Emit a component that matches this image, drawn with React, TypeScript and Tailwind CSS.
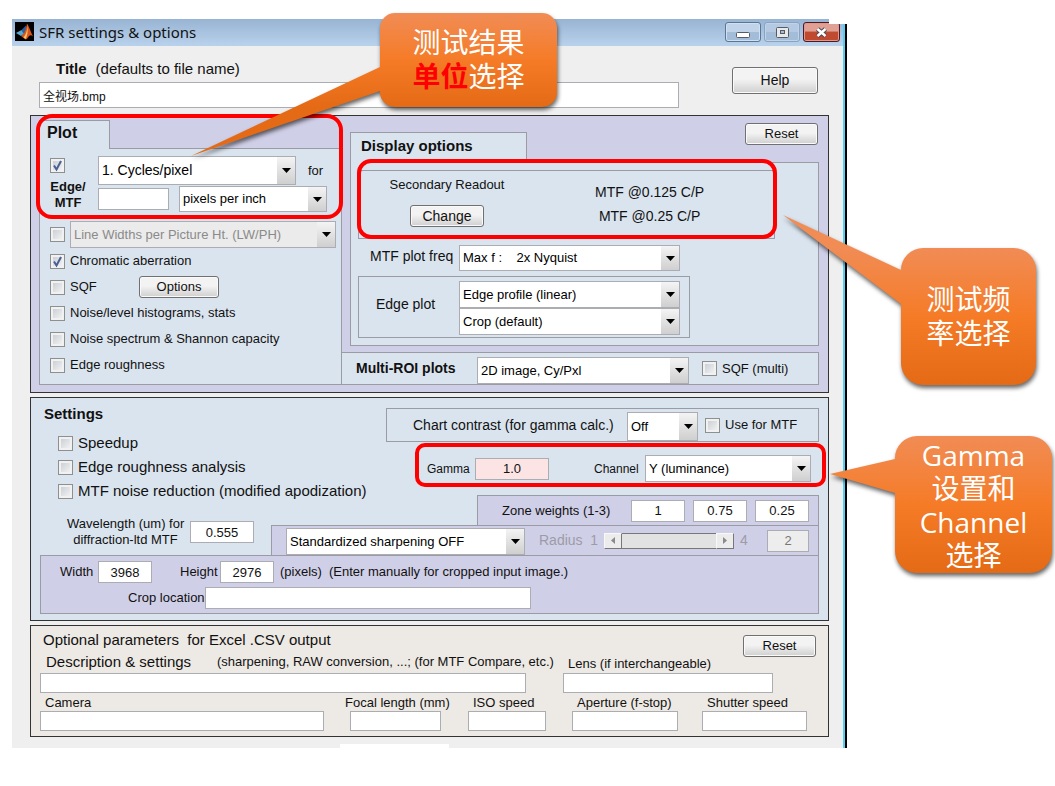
import clsx from 'clsx';
import { FC, ReactNode, useId } from 'react';

type SelectProps = {
  label: string;
  options: string[];
  className?: string;
  disabled?: boolean;
  id?: string;
};

const Select: FC<SelectProps> = ({ label, options, className, disabled, id }) => (
  <div className={clsx('relative shrink-0', className)}>
    <select
      id={id}
      aria-label={label}
      disabled={disabled}
      className={clsx(
        'block h-full w-full appearance-none border border-[#abadb3] pl-[3px] pr-5 opacity-100',
        disabled ? 'bg-[#ebebeb] text-[#8a8a8a]' : 'bg-white text-black',
      )}
    >
      {options.map((option) => (
        <option key={option}>{option}</option>
      ))}
    </select>
    <span className="pointer-events-none absolute inset-y-px right-px flex w-[18px] items-center justify-center bg-linear-to-b from-[#f4f4f4] to-[#cfcfcf]">
      <svg width="9" height="5" viewBox="0 0 9 5">
        <path d="M0 0h9L4.500 5z" fill="#000" />
      </svg>
    </span>
  </div>
);

type CheckboxProps = {
  children?: ReactNode;
  label?: string;
  checked?: boolean;
  className?: string;
};

const Checkbox: FC<CheckboxProps> = ({
  children,
  label,
  checked,
  className,
}) => (
  <label className={clsx('flex items-center gap-[5px] whitespace-nowrap', className)}>
    <span className="relative size-[15px] shrink-0">
      <input
        type="checkbox"
        aria-label={label}
        defaultChecked={checked}
        className="peer block size-full appearance-none border border-[#8e8f8f] bg-linear-to-br from-[#c4c9cf] to-[#f8f8f8] shadow-[inset_0_0_0_2px_#f1f1f1]"
      />
      <svg
        viewBox="0 0 15 15"
        className="pointer-events-none absolute inset-0 hidden peer-checked:block"
      >
        <path
          d="M4 7.500l2.500 4L11 3"
          fill="none"
          stroke="#4a5f97"
          strokeWidth="2"
        />
      </svg>
    </span>
    {children}
  </label>
);

type ButtonProps = {
  children: ReactNode;
  className?: string;
};

const Button: FC<ButtonProps> = ({ children, className }) => (
  <button
    type="button"
    className={clsx(
      'shrink-0 rounded-[3px] border border-[#707070] bg-linear-to-b from-[#f3f3f3] from-45% to-[#cfcfcf] shadow-[inset_0_0_0_1px_#fafafa]',
      className,
    )}
  >
    {children}
  </button>
);

type TextBoxProps = {
  id?: string;
  label?: string;
  value?: string;
  className?: string;
  disabled?: boolean;
};

const TextBox: FC<TextBoxProps> = ({ id, label, value, className, disabled }) => (
  <input
    id={id}
    type="text"
    aria-label={label}
    defaultValue={value}
    disabled={disabled}
    className={clsx('block border border-[#abadb3]', className)}
  />
);

type FieldProps = {
  label: string;
  className?: string;
  inputClassName?: string;
};

const Field: FC<FieldProps> = ({ label, className, inputClassName }) => {
  const id = useId();

  return (
    <div className={clsx('flex flex-col', className)}>
      <label htmlFor={id} className="h-[18px] leading-5 whitespace-nowrap">
        {label}
      </label>
      <TextBox id={id} className={clsx('h-5 bg-white', inputClassName)} />
    </div>
  );
};

type CalloutProps = {
  id: string;
  width: number;
  height: number;
  radius: number;
  tip: [number, number];
  base: [number, number];
  className: string;
  children: ReactNode;
};

// Rounded note whose pointer leaves from the left side
const Callout: FC<CalloutProps> = ({
  id,
  width: w,
  height: h,
  radius: r,
  tip,
  base,
  className,
  children,
}) => {
  const outline = [
    `M${r} 0H${w - r}A${r} ${r} 0 0 1 ${w} ${r}V${h - r}`,
    `A${r} ${r} 0 0 1 ${w - r} ${h}H${r}A${r} ${r} 0 0 1 0 ${h - r}`,
    `V${base[1]}L${tip[0]} ${tip[1]}L0 ${base[0]}V${r}A${r} ${r} 0 0 1 ${r} 0Z`,
  ].join('');

  return (
    <aside
      className={clsx(
        'absolute flex items-center justify-center text-center text-[28px] text-white',
        className,
      )}
    >
      <svg
        width={w}
        height={h}
        className="absolute top-0 left-0 overflow-visible drop-shadow-[1px_3px_2px_rgba(0,0,0,0.6)]"
      >
        <defs>
          <linearGradient id={id} gradientUnits="userSpaceOnUse" x1="0" y1="0" x2="0" y2={h}>
            <stop offset="0" stopColor="#f18c55" />
            <stop offset="0.5" stopColor="#f57b27" />
            <stop offset="1" stopColor="#e46a15" />
          </linearGradient>
        </defs>
        <path d={outline} fill={`url(#${id})`} />
      </svg>
      <p className="relative pt-0.5">{children}</p>
    </aside>
  );
};

const Highlight: FC<{ className: string }> = ({ className }) => (
  <div
    className={clsx(
      'pointer-events-none absolute z-10 border-4 border-[#fe0000]',
      className,
    )}
  />
);

const TitleBar = () => (
  <header className="relative flex h-[27px] items-start bg-linear-to-b from-[#98b4d3] to-[#b9d2ec] pt-[3px] pr-[3px] pl-[3px]">
    <svg width="19" height="19" viewBox="0 0 19 19" className="shrink-0 bg-black">
      <path d="M1 11l5.500-3 3 3.500L6 14z" fill="#5aa7cf" />
      <path d="M6.500 8L11 3.500l.5 4L9 12z" fill="#2b5f9e" />
      <path d="M12 1.500c2 3 3.500 8 6 13-2-2-3.500-1.500-5 1-1.200 2-2.500 2.500-3 1.500L6 14c4-2 5-7 6-12.500z" fill="#d9561a" />
      <path d="M12 2c.5 4 .3 9-3.500 13.500L10.500 17c2.500-4 2.500-10 1.500-15z" fill="#f9c46b" />
    </svg>
    <h1 className="ml-[5px] flex-1 font-['Noto_Sans','Open_Sans',sans-serif] text-[15px] leading-5 text-[#111]">
      SFR settings &amp; options
    </h1>
    <div className="flex gap-[3px]">
      <button
        type="button"
        aria-label="Minimize"
        className="flex h-5 w-9 items-center justify-center rounded-[3px] border border-[#5b7593] bg-linear-to-b from-[#c1d3e8] from-50% to-[#a3bcd8] to-50% pt-1 shadow-[inset_0_0_0_1px_#cfe0f2]"
      >
        <svg width="14" height="7" viewBox="0 0 14 7">
          <rect x="0.500" y="1.500" width="13" height="5" rx="1" fill="#fff" stroke="#555b66" />
        </svg>
      </button>
      <button
        type="button"
        aria-label="Maximize"
        className="flex h-5 w-9 items-center justify-center rounded-[3px] border border-[#8aa3c0] bg-linear-to-b from-[#b5cae2] from-50% to-[#a3bcd8] to-50% shadow-[inset_0_0_0_1px_#bfd3e9]"
      >
        <svg width="13" height="11" viewBox="0 0 13 11">
          <rect x="0.500" y="0.500" width="12" height="10" rx="1" fill="#e8e8e8" stroke="#555b66" />
          <rect x="4.500" y="3.500" width="4" height="3" fill="#a3bcd8" stroke="#555b66" />
        </svg>
      </button>
      <button
        type="button"
        aria-label="Close"
        className="flex h-5 w-[37px] items-center justify-center rounded-[3px] border border-[#4d1a24] bg-linear-to-b from-[#e0a093] from-45% to-[#c04a30] to-50% shadow-[inset_0_0_0_1px_#dd9a8c]"
      >
        <svg width="13" height="11" viewBox="0 0 13 11">
          <path d="M2.500 2l8 7M10.500 2l-8 7" stroke="#4f4a55" strokeWidth="4.500" />
          <path d="M2.500 2l8 7M10.500 2l-8 7" stroke="#fff" strokeWidth="2.500" />
        </svg>
      </button>
    </div>
    <span className="absolute top-0 -right-1 h-[5px] w-[18px] bg-white" />
  </header>
);

const PlotOptions = () => (
  <section className="relative w-[303px] shrink-0 pt-1">
    <Highlight className="-top-[2px] -right-px -left-[3px] h-[105px] rounded-[16px]" />
    <h2 className="relative -mb-px h-[29px] w-[71px] border border-b-0 border-[#9b9ba3] bg-[#dae4ee] pl-[7px] text-[16px] leading-6 font-bold">
      Plot
    </h2>
    <div className="border border-[#9b9ba3] bg-[#dae4ee] pt-[7px] pb-1.5 pl-[10px]">
      <div className="flex">
        <label className="flex w-12 flex-col font-bold">
          <Checkbox label="Edge/MTF" checked className="mt-0.5" />
          <span className="mt-[6px] w-9 text-center leading-4">Edge/ MTF</span>
        </label>
        <div className="flex flex-col">
          <div className="flex items-center">
            <Select label="Plot units" options={['1. Cycles/pixel']} className="h-[29px] w-[198px] text-[14px]" />
            <span className="ml-3">for</span>
          </div>
          <div className="mt-px flex items-center gap-[10px]">
            <TextBox label="Pixel density" className="h-[22px] w-[71px] bg-white" />
            <Select label="Density units" options={['pixels per inch']} className="h-[26px] w-[148px]" />
          </div>
        </div>
      </div>
      <div className="mt-[9px] flex items-center gap-[5px]">
        <Checkbox label="Line widths" />
        <Select
          label="Line width units"
          disabled
          options={['Line Widths per Picture Ht. (LW/PH)']}
          className="h-[27px] w-[266px]"
        />
      </div>
      <Checkbox checked className="h-[26px]">
        Chromatic aberration
      </Checkbox>
      <div className="flex h-[26px] items-center">
        <Checkbox className="w-[89px]">SQF</Checkbox>
        <Button className="h-[22px] w-20">Options</Button>
      </div>
      <Checkbox className="h-[26px]">Noise/level histograms, stats</Checkbox>
      <Checkbox className="h-[26px]">Noise spectrum &amp; Shannon capacity</Checkbox>
      <Checkbox className="h-[26px]">Edge roughness</Checkbox>
    </div>
  </section>
);

const DisplayOptions = () => (
  <section className="-ml-px flex flex-1 flex-col">
    <div className="ml-[9px] flex justify-between">
      <h2 className="relative mt-4 -mb-px h-[31px] w-[177px] border border-b-0 border-[#9b9ba3] bg-[#dae4ee] pl-[10px] text-[15px] leading-[26px] font-bold">
        Display options
      </h2>
      <Button className="mt-[7px] mr-px h-[22px] w-[73px]">Reset</Button>
    </div>
    <div className="ml-[9px] border border-[#9b9ba3] bg-[#dae4ee] p-[7px]">
      <div className="relative flex h-[69px] w-[417px] border border-[#9b9ba3]">
        <Highlight className="-top-3 -right-[3px] -bottom-px -left-[2px] rounded-[14px]" />
        <div className="ml-[31px] flex w-[114px] flex-col items-center pt-1.5">
          <span className="leading-4 whitespace-nowrap">Secondary Readout</span>
          <Button className="mt-3 h-[22px] w-[74px] text-[14px]">Change</Button>
        </div>
        <div className="ml-[91px] pt-[9px] text-center text-[14px] leading-6">
          <p>MTF @0.125 C/P</p>
          <p>MTF @0.25 C/P</p>
        </div>
      </div>
      <div className="mt-1.5 flex">
        <label htmlFor="plot-freq" className="w-[101px] pl-3 text-[14px] leading-[23px] whitespace-nowrap">
          MTF plot freq
        </label>
        <Select
          id="plot-freq"
          label="MTF plot freq"
          options={['Max f :\u00a0\u00a0\u00a0 2x Nyquist']}
          className="h-[26px] w-[221px]"
        />
      </div>
      <div className="mt-[5px] flex w-[332px] border border-[#9b9ba3] pt-1 pb-0.5">
        <span className="w-[100px] self-center pb-2 pl-[17px] text-[14px]">Edge plot</span>
        <div>
          <Select label="Edge plot" options={['Edge profile (linear)']} className="h-[27px] w-[221px]" />
          <Select label="Edge plot crop" options={['Crop (default)']} className="h-[27px] w-[221px]" />
        </div>
      </div>
    </div>
    <div className="mt-auto flex h-[33px] items-center border border-[#9b9ba3] bg-[#dae4ee] pl-[14px]">
      <label htmlFor="multi-roi" className="w-[121px] text-[14px] font-bold">
        Multi-ROI plots
      </label>
      <Select
        id="multi-roi"
        label="Multi-ROI plots"
        options={['2D image, Cy/Pxl']}
        className="h-[27px] w-[212px] self-end"
      />
      <Checkbox className="ml-[13px]">SQF (multi)</Checkbox>
    </div>
  </section>
);

const Settings = () => (
  <section className="mt-1 border border-[#333] bg-[#dae4ee] pr-[9px] pb-1.5 pl-[9px]">
    <div className="flex">
      <div className="w-[231px] shrink-0 pt-1.5">
        <h2 className="pl-1 text-[15px] leading-5 font-bold">Settings</h2>
        <div className="mt-[7px] pl-[18px] text-[15px]">
          <Checkbox className="h-6">Speedup</Checkbox>
          <Checkbox className="h-6">Edge roughness analysis</Checkbox>
          <Checkbox className="h-6">MTF noise reduction (modified apodization)</Checkbox>
        </div>
        <div className="mt-[13px] flex items-center pl-[27px]">
          <label htmlFor="wavelength" className="w-[123px] pr-[6px] text-center leading-4 whitespace-nowrap">
            Wavelength (um) for
            <br />
            diffraction-ltd MTF
          </label>
          <TextBox id="wavelength" value="0.555" className="h-[22px] w-16 bg-white text-center" />
        </div>
      </div>
      <div className="flex flex-1 flex-col items-end">
        <div className="mt-[10px] flex h-[34px] w-[433px] items-center border border-[#9b9ba3]">
          <label htmlFor="contrast" className="w-[240px] pl-[26px] text-[14px] whitespace-nowrap">
            Chart contrast (for gamma calc.)
          </label>
          <Select
            id="contrast"
            label="Chart contrast"
            options={['Off']}
            className="h-[29px] w-[71px] self-end"
          />
          <Checkbox className="ml-[7px]">Use for MTF</Checkbox>
        </div>
        <div className="relative mt-[13px] flex h-[27px] w-[392px] items-center">
          <Highlight className="-top-3 -right-[7px] -bottom-[5px] -left-3 rounded-[10px]" />
          <label htmlFor="gamma" className="w-12 text-[12px]">
            Gamma
          </label>
          <TextBox id="gamma" value="1.0" className="h-[22px] w-[74px] bg-[#fce4e4] text-center" />
          <label htmlFor="channel" className="ml-[45px] w-[51px] text-[12px]">
            Channel
          </label>
          <Select id="channel" label="Channel" options={['Y (luminance)']} className="h-[27px] w-[166px]" />
        </div>
        <div className="mt-[13px] flex h-[31px] w-[342px] items-center gap-2 border border-[#9b9ba3] bg-[#d0cfe8]">
          <span className="w-[145px] pl-6 whitespace-nowrap">Zone weights (1-3)</span>
          {['1', '0.75', '0.25'].map((weight, index) => (
            <TextBox
              key={weight}
              label={`Zone ${index + 1} weight`}
              value={weight}
              className="h-[22px] w-[54px] bg-white text-center"
            />
          ))}
        </div>
        <div className="-mt-px flex h-[31px] w-full items-center border border-[#9b9ba3] bg-[#d0cfe8] pl-[14px]">
          <Select
            label="Sharpening"
            options={['Standardized sharpening OFF']}
            className="h-[27px] w-[239px] self-end"
          />
          <div className="flex items-center pl-[14px] text-[14px] text-[#9c9ca6]">
            <label htmlFor="radius" className="w-[65px] whitespace-pre">
              Radius  1
            </label>
            <button
              type="button"
              disabled
              aria-label="Decrease radius"
              className="flex h-4 w-[18px] items-center justify-center border border-[#f8f8f8] border-r-[#777] border-b-[#777] bg-[#ececec]"
            >
              <svg width="4" height="7" viewBox="0 0 4 7">
                <path d="M4 0v7L0 3.500z" fill="#8a8a8a" />
              </svg>
            </button>
            <input
              id="radius"
              type="range"
              disabled
              min="1"
              max="4"
              defaultValue="2"
              className="h-4 w-[94px] appearance-none border-y border-[#777] bg-[#e2e2e2] [&::-webkit-slider-thumb]:w-0 [&::-webkit-slider-thumb]:appearance-none"
            />
            <button
              type="button"
              disabled
              aria-label="Increase radius"
              className="flex h-4 w-[18px] items-center justify-center border border-[#f8f8f8] border-r-[#777] border-b-[#777] bg-[#ececec]"
            >
              <svg width="4" height="7" viewBox="0 0 4 7">
                <path d="M0 0v7l4-3.500z" fill="#8a8a8a" />
              </svg>
            </button>
            <span className="ml-1.5 w-[27px]">4</span>
          </div>
          <TextBox
            label="Radius value"
            value="2"
            disabled
            className="h-[22px] w-[42px] bg-[#ededed] text-center text-[#777]"
          />
        </div>
      </div>
    </div>
    <div className="-mt-px border border-[#9b9ba3] bg-[#d0cfe8] pt-[5px] pb-1 pl-[19px]">
      <div className="flex items-center">
        <label htmlFor="width" className="w-[38px]">
          Width
        </label>
        <TextBox id="width" value="3968" className="h-[22px] w-[54px] bg-white text-center" />
        <label htmlFor="height" className="ml-7 w-10">
          Height
        </label>
        <TextBox id="height" value="2976" className="h-[22px] w-[54px] bg-white text-center" />
        <span className="ml-1.5 w-[49px]">(pixels)</span>
        <span>(Enter manually for cropped input image.)</span>
      </div>
      <div className="mt-1 flex items-center pl-[68px]">
        <label htmlFor="crop-location" className="w-[77px] whitespace-nowrap">
          Crop location
        </label>
        <TextBox id="crop-location" className="h-[22px] w-[326px] bg-white" />
      </div>
    </div>
  </section>
);

const ExcelParameters = () => (
  <section className="mt-1 border border-[#333] bg-[#ede9e4] pb-[5px] pl-[9px]">
    <div className="flex pr-3">
      <div className="flex-1 pt-[3px]">
        <h2 className="pl-[3px] text-[15px] leading-[22px] whitespace-pre">
          Optional parameters  for Excel .CSV output
        </h2>
        <div className="flex h-[22px] items-center">
          <label htmlFor="description" className="flex flex-1 items-center pl-1.5 whitespace-nowrap">
            <span className="w-[171px] text-[15px]">Description &amp; settings</span>
            (sharpening, RAW conversion, ...; (for MTF Compare, etc.)
          </label>
          <label htmlFor="lens" className="w-[175px] pt-1 whitespace-nowrap">
            Lens (if interchangeable)
          </label>
        </div>
      </div>
      <Button className="mt-[9px] h-[22px] w-[73px]">Reset</Button>
    </div>
    <div className="flex gap-[37px] pr-[55px]">
      <TextBox id="description" className="h-5 min-w-0 flex-1 bg-white" />
      <TextBox id="lens" className="h-5 w-[210px] bg-white" />
    </div>
    <div className="flex pr-[21px]">
      <Field label="Camera" className="min-w-0 flex-1 [&>label]:pl-[5px]" />
      <Field label="Focal length (mm)" className="ml-[21px] w-[101px]" inputClassName="mx-[5px]" />
      <Field label="ISO speed" className="ml-[22px] w-[78px] [&>label]:pl-[5px]" />
      <Field label="Aperture (f-stop)" className="ml-[26px] w-[106px] [&>label]:pl-[5px]" />
      <Field label="Shutter speed" className="ml-6 w-[105px] [&>label]:pl-[5px]" />
    </div>
  </section>
);

const App = () => (
  <div className="relative min-h-screen overflow-hidden bg-white pt-[19px] pr-[208px] pb-[38px] pl-3 font-['Liberation_Sans','Noto_Sans_CJK_SC',sans-serif] text-[13px] text-[#111]">
    <main className="border-r-2 border-black bg-[#efefef]">
      <div className="border-r-2 border-[#56cff5]">
        <TitleBar />
        <div className="pt-3.5 pr-[14px] pl-[18px]">
          <div className="flex pr-[11px] pl-[9px]">
            <div className="flex-1">
              <label htmlFor="title" className="flex h-[22px] gap-[9px] pl-[17px] text-[15px] leading-[18px]">
                <span className="font-bold">Title</span>
                <span>(defaults to file name)</span>
              </label>
              <TextBox id="title" value="全视场.bmp" className="h-[26px] w-full bg-white pl-[3px] text-[12px]" />
            </div>
            <Button className="mt-[7px] ml-[53px] h-[27px] w-[86px] text-[14px]">Help</Button>
          </div>
          <div className="mt-[7px] flex border border-[#333] bg-[#d0cfe8] pr-[9px] pb-[7px] pl-2">
            <PlotOptions />
            <DisplayOptions />
          </div>
          <Settings />
          <ExcelParameters />
          <div className="ml-[310px] flex h-[11px] w-[109px] items-end">
            <span className="h-1 w-full bg-white" />
          </div>
        </div>
      </div>
    </main>

    <Callout
      id="unit-note"
      width={177}
      height={94}
      radius={15}
      tip={[-189, 143]}
      base={[54, 78]}
      className="top-[13px] left-[380px] z-20 h-[94px] w-[177px] leading-[34px]"
    >
      测试结果
      <br />
      <strong className="font-bold text-[#fe0000]">单位</strong>选择
    </Callout>
    <Callout
      id="frequency-note"
      width={135}
      height={137}
      radius={22}
      tip={[-118, -33]}
      base={[22, 56]}
      className="top-[248px] right-[19px] z-20 h-[137px] w-[135px] leading-[34px]"
    >
      测试频
      <br />
      率选择
    </Callout>
    <Callout
      id="channel-note"
      width={157}
      height={137}
      radius={22}
      tip={[-65, 38]}
      base={[23, 57]}
      className="top-[436px] right-[3px] z-20 h-[137px] w-[157px] leading-[33px]"
    >
      <span className="font-['Open_Sans',sans-serif]">Gamma</span>
      <br />
      设置和
      <br />
      <span className="font-['Open_Sans',sans-serif]">Channel</span>
      <br />
      选择
    </Callout>
  </div>
);

export default App;
